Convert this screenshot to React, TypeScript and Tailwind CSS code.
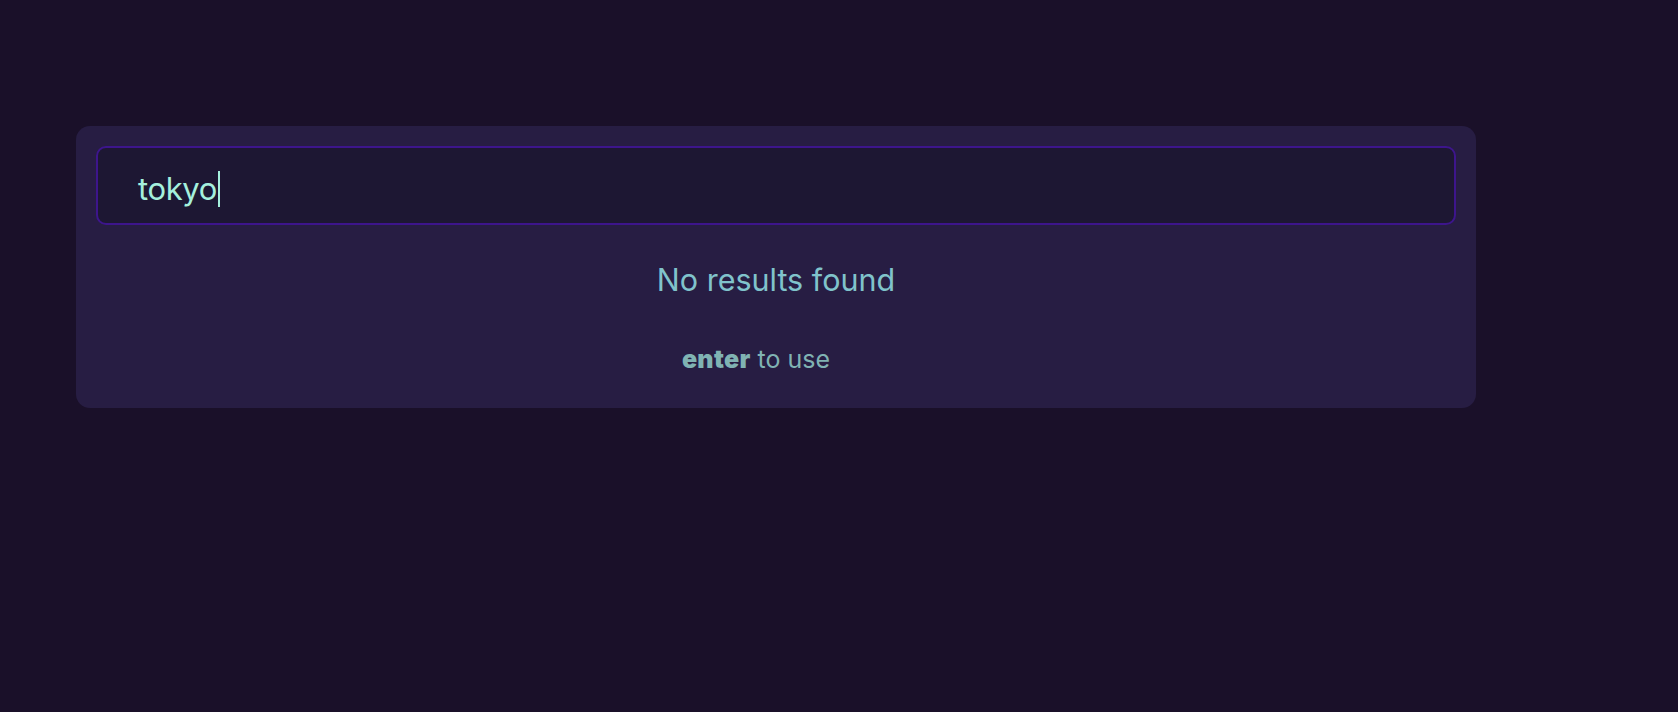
export default function App() {
  return (
    <div
      className="min-h-screen w-full bg-[#1a1029] pt-[126px] pl-[76px]"
      style={{ fontFamily: "Inter, 'Noto Sans', sans-serif" }}
    >
      <div className="w-[1400px] h-[282px] rounded-[14px] bg-[#271d43] p-5">
        <div className="flex h-[79px] items-center rounded-[10px] border-2 border-[#3d158c] bg-[#1d1733] pl-[40px]">
          <span className="mt-[5px] text-[31px] leading-none tracking-[-0.4px] text-[#a5f0dd]">tokyo</span>
          <span className="ml-[1px] mt-[6px] h-[36px] w-[2px] bg-[#a5f0dd]" />
        </div>
        <div className="mt-[37px] text-center text-[30.5px] leading-[36px] text-[#80c3cb]">
          No results found
        </div>
        <div className="mt-[45px] pr-10 text-center text-[25px] leading-[32px] text-[#80b3b3]">
          <span className="font-black tracking-[0.3px]">enter</span> to use
        </div>
      </div>
    </div>
  );
}
